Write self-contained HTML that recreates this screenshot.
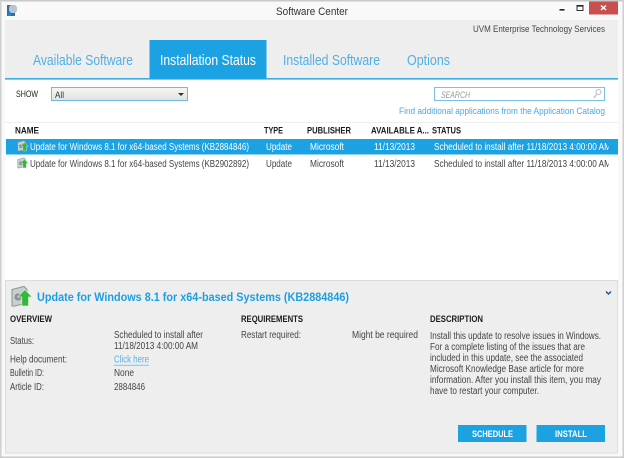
<!DOCTYPE html>
<html><head><meta charset="utf-8"><title>Software Center</title>
<style>
html,body{margin:0;padding:0;width:624px;height:458px;overflow:hidden;background:#fff}
svg{display:block}
text{font-family:"Liberation Sans",sans-serif;white-space:pre}
</style></head><body>
<svg width="624" height="458" viewBox="0 0 624 458" xmlns="http://www.w3.org/2000/svg">
<defs>
<filter id="b" x="0" y="0" width="100%" height="100%"><feGaussianBlur stdDeviation="0.32"/></filter>
<clipPath id="st"><rect x="430" y="130" width="178.500" height="50"/></clipPath>
<linearGradient id="dd" x1="0" y1="0" x2="0" y2="1"><stop offset="0" stop-color="#f6f6f6"/><stop offset="1" stop-color="#e2e2e2"/></linearGradient>
<g id="ic">
<path d="M1 3 L9 1 L11 3 V12 L3 14 H1 Z" fill="#c9ced0" stroke="#8f9699" stroke-width=".7"/>
<circle cx="5" cy="8" r="2.4" fill="#8a9295"/>
<path d="M9.5 3 L14.500 8 H12 V14 H7.500 V8 H4.800 Z" fill="#36b73b" stroke="#d8f0d0" stroke-width=".5"/>
</g>
</defs>
<g filter="url(#b)">
<rect width="624" height="458" fill="#f9f9f9"/>
<rect x="0" y="0" width="624" height="1.500" fill="#c9c9c9"/>
<rect x="0" y="0" width="1.500" height="458" fill="#cfcfcf"/>
<rect x="622.500" y="0" width="1.500" height="458" fill="#cfcfcf"/>
<rect x="0" y="456.500" width="624" height="1.500" fill="#c9c9c9"/>
<rect x="7" y="5" width="8" height="11" fill="#2c6fb0"/>
<rect x="9" y="5" width="8" height="8" rx="3" fill="#b9c6cf"/>
<rect x="8" y="13" width="3" height="3" fill="#1a84d8"/>
<text x="276" y="15" font-size="11" fill="#333" textLength="72" lengthAdjust="spacingAndGlyphs">Software Center</text>
<rect x="559.500" y="9" width="5" height="1.600" fill="#222"/>
<rect x="577" y="5.500" width="6" height="5" fill="none" stroke="#333" stroke-width="1"/>
<rect x="576.500" y="5" width="7" height="1.600" fill="#222"/>
<rect x="589" y="1.500" width="29" height="13" fill="#c75050"/>
<path d="M601 5.500 L606 10 M606 5.500 L601 10" stroke="#fff" stroke-width="1.500"/>

<rect x="5" y="20" width="613" height="59" fill="#eeeeee"/>
<text x="473" y="32" font-size="9.600" fill="#444" textLength="132" lengthAdjust="spacingAndGlyphs">UVM Enterprise Technology Services</text>
<rect x="5" y="78" width="613" height="1.600" fill="#3badE3"/>
<rect x="149.500" y="40" width="117" height="39" fill="#1ba1e2"/>
<text x="33" y="65" font-size="14.800" fill="#4fb0e8" textLength="100" lengthAdjust="spacingAndGlyphs">Available Software</text>
<text x="160" y="65" font-size="14.800" fill="#fff" textLength="96" lengthAdjust="spacingAndGlyphs">Installation Status</text>
<text x="283" y="65" font-size="14.800" fill="#4fb0e8" textLength="97" lengthAdjust="spacingAndGlyphs">Installed Software</text>
<text x="407" y="65" font-size="14.800" fill="#4fb0e8" textLength="43" lengthAdjust="spacingAndGlyphs">Options</text>

<rect x="5" y="80" width="613" height="201" fill="#fff"/>
<text x="16" y="97" font-size="8.800" fill="#222" textLength="22" lengthAdjust="spacingAndGlyphs">SHOW</text>
<rect x="51.500" y="87.500" width="136" height="13" fill="url(#dd)" stroke="#6fb9e6"/>
<text x="55" y="98" font-size="9.600" fill="#333" textLength="9" lengthAdjust="spacingAndGlyphs">All</text>
<path d="M178 93 H184 L181 96 Z" fill="#333"/>
<rect x="434.500" y="87.500" width="170" height="13" fill="#fff" stroke="#7cc0ea"/>
<text x="441" y="98" font-size="9.200" font-style="italic" fill="#999" textLength="29" lengthAdjust="spacingAndGlyphs">SEARCH</text>
<circle cx="598.500" cy="92" r="2.500" fill="none" stroke="#bbb" stroke-width="1"/>
<path d="M596.500 94.500 L594 98" stroke="#bbb" stroke-width="1.200"/>
<text x="399" y="114" font-size="9.600" fill="#4ba8e0" textLength="206" lengthAdjust="spacingAndGlyphs">Find additional applications from the Application Catalog</text>

<rect x="5" y="122" width="613" height="1" fill="#eeeeee"/>
<g font-size="9.200" font-weight="bold" fill="#1a1a1a">
<text x="15" y="133.500" textLength="24" lengthAdjust="spacingAndGlyphs">NAME</text>
<text x="264" y="133.500" textLength="19" lengthAdjust="spacingAndGlyphs">TYPE</text>
<text x="307" y="133.500" textLength="44" lengthAdjust="spacingAndGlyphs">PUBLISHER</text>
<text x="371" y="133.500" textLength="58" lengthAdjust="spacingAndGlyphs">AVAILABLE A...</text>
<text x="432" y="133.500" textLength="29" lengthAdjust="spacingAndGlyphs">STATUS</text>
</g>
<rect x="6" y="139" width="612" height="15.500" fill="#1ba1e2"/>
<use href="#ic" transform="translate(17 140) scale(.78)"/>
<use href="#ic" transform="translate(17 157) scale(.78)"/>
<g font-size="9.800" fill="#fff">
<text x="30" y="150" textLength="219" lengthAdjust="spacingAndGlyphs">Update for Windows 8.1 for x64-based Systems (KB2884846)</text>
<text x="266" y="150" textLength="26" lengthAdjust="spacingAndGlyphs">Update</text>
<text x="310" y="150" textLength="34" lengthAdjust="spacingAndGlyphs">Microsoft</text>
<text x="374" y="150" textLength="41" lengthAdjust="spacingAndGlyphs">11/13/2013</text>
<text x="434" y="150" textLength="177" lengthAdjust="spacingAndGlyphs" clip-path="url(#st)">Scheduled to install after 11/18/2013 4:00:00 AM</text>
</g>
<g font-size="9.800" fill="#444">
<text x="30" y="167" textLength="219" lengthAdjust="spacingAndGlyphs">Update for Windows 8.1 for x64-based Systems (KB2902892)</text>
<text x="266" y="167" textLength="26" lengthAdjust="spacingAndGlyphs">Update</text>
<text x="310" y="167" textLength="34" lengthAdjust="spacingAndGlyphs">Microsoft</text>
<text x="374" y="167" textLength="41" lengthAdjust="spacingAndGlyphs">11/13/2013</text>
<text x="434" y="167" textLength="177" lengthAdjust="spacingAndGlyphs" clip-path="url(#st)">Scheduled to install after 11/18/2013 4:00:00 AM</text>
</g>

<rect x="5.500" y="280.500" width="612" height="172.500" fill="#eeeeee" stroke="#dcdcdc"/>
<use href="#ic" transform="translate(10.500 285) scale(1.500)"/>
<text x="37" y="301" font-size="12.400" font-weight="bold" fill="#1f9fe2" textLength="312" lengthAdjust="spacingAndGlyphs">Update for Windows 8.1 for x64-based Systems (KB2884846)</text>
<path d="M606 291.500 L608.500 294 L611 291.500" fill="none" stroke="#1f4f9c" stroke-width="1.400"/>
<g font-size="9.200" font-weight="bold" fill="#1a1a1a">
<text x="10" y="322" textLength="42" lengthAdjust="spacingAndGlyphs">OVERVIEW</text>
<text x="241" y="322" textLength="62" lengthAdjust="spacingAndGlyphs">REQUIREMENTS</text>
<text x="430" y="322" textLength="53" lengthAdjust="spacingAndGlyphs">DESCRIPTION</text>
</g>
<g font-size="9.800" fill="#444">
<text x="10" y="344" textLength="24" lengthAdjust="spacingAndGlyphs">Status:</text>
<text x="114" y="338" textLength="89" lengthAdjust="spacingAndGlyphs">Scheduled to install after</text>
<text x="114" y="349" textLength="84" lengthAdjust="spacingAndGlyphs">11/18/2013 4:00:00 AM</text>
<text x="10" y="362.500" textLength="57" lengthAdjust="spacingAndGlyphs">Help document:</text>
<text x="114" y="362.500" textLength="35" lengthAdjust="spacingAndGlyphs" fill="#55b2ea">Click here</text>
<text x="10" y="376" textLength="34" lengthAdjust="spacingAndGlyphs">Bulletin ID:</text>
<text x="114" y="376" textLength="20" lengthAdjust="spacingAndGlyphs">None</text>
<text x="10" y="390" textLength="34" lengthAdjust="spacingAndGlyphs">Article ID:</text>
<text x="114" y="390" textLength="31" lengthAdjust="spacingAndGlyphs">2884846</text>
<text x="241" y="338" textLength="60" lengthAdjust="spacingAndGlyphs">Restart required:</text>
<text x="352" y="338" textLength="66" lengthAdjust="spacingAndGlyphs">Might be required</text>
<text x="430" y="339" textLength="171" lengthAdjust="spacingAndGlyphs">Install this update to resolve issues in Windows.</text>
<text x="430" y="350" textLength="155" lengthAdjust="spacingAndGlyphs">For a complete listing of the issues that are</text>
<text x="430" y="361" textLength="153" lengthAdjust="spacingAndGlyphs">included in this update, see the associated</text>
<text x="430" y="372" textLength="154" lengthAdjust="spacingAndGlyphs">Microsoft Knowledge Base article for more</text>
<text x="430" y="383" textLength="171" lengthAdjust="spacingAndGlyphs">information. After you install this item, you may</text>
<text x="430" y="394" textLength="109" lengthAdjust="spacingAndGlyphs">have to restart your computer.</text>
</g>
<rect x="114" y="364.800" width="35" height="1" fill="#7cc4ee"/>
<rect x="458" y="425" width="68.500" height="17" fill="#1ba1e2"/>
<rect x="536.500" y="425" width="68.500" height="17" fill="#1ba1e2"/>
<g font-size="9.200" font-weight="bold" fill="#fff">
<text x="472" y="437" textLength="41" lengthAdjust="spacingAndGlyphs">SCHEDULE</text>
<text x="555" y="437" textLength="32" lengthAdjust="spacingAndGlyphs">INSTALL</text>
</g>
</g>
</svg>
</body></html>
